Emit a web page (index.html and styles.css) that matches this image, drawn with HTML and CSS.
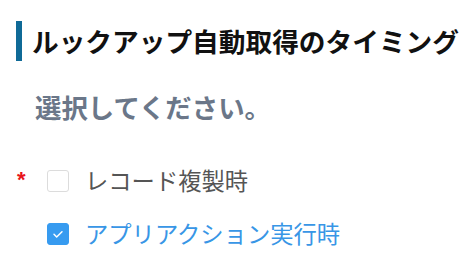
FILE: index.html
```html
<!DOCTYPE html>
<html lang="ja">
<head>
<meta charset="utf-8">
<link rel="stylesheet" href="styles.css">
</head>
<body>
<div class="panel">
  <h2 class="title">ルックアップ自動取得のタイミング</h2>
  <p class="subtitle">選択してください。</p>
  <div class="field">
    <span class="required">*</span>
    <div class="options">
      <label class="option">
        <span class="box"></span>
        <span class="label">レコード複製時</span>
      </label>
      <label class="option checked">
        <span class="box">
          <svg viewBox="0 0 24 24" width="16" height="16"><path d="M6 12.5l4 4L18 8.5" fill="none" stroke="#fff" stroke-width="2.2" stroke-linecap="round" stroke-linejoin="round"/></svg>
        </span>
        <span class="label">アプリアクション実行時</span>
      </label>
    </div>
  </div>
</div>
</body>
</html>
```
FILE: styles.css
```css
html, body {
  margin: 0;
  padding: 0;
  background: #fff;
}
body {
  font-family: "Noto Sans CJK JP", "Noto Sans", sans-serif;
}
.panel {
  width: 474px;
  height: 268px;
  padding-top: 21px;
  box-sizing: border-box;
}
.title {
  margin: 0 0 0 16px;
  height: 40px;
  display: flex;
  align-items: center;
  border-left: 6px solid #0f6a97;
  padding-left: 10px;
  font-size: 26.7px;
  font-weight: 700;
  color: #111;
  line-height: 1;
}
.subtitle {
  margin: 31px 0 0 35px;
  font-size: 26.4px;
  line-height: 30px;
  font-weight: 700;
  color: #6b7789;
}
.field {
  display: flex;
  margin-top: 47px;
}
.required {
  width: 47px;
  padding-left: 17px;
  box-sizing: border-box;
  color: #e8141b;
  font-size: 22px;
  font-weight: 700;
  line-height: 22px;
  height: 22px;
  font-family: "Liberation Sans", sans-serif;
}
.options {
  display: flex;
  flex-direction: column;
  gap: 30px;
}
.option {
  display: flex;
  align-items: center;
  gap: 16px;
  height: 23px;
}
.box {
  width: 22px;
  height: 22px;
  box-sizing: border-box;
  border: 1.5px solid #dcdcdc;
  border-radius: 3px;
  background: #fff;
  display: flex;
  align-items: center;
  justify-content: center;
}
.checked .box {
  border-color: #379bf0;
  background: #379bf0;
}
.label {
  font-size: 23.3px;
  line-height: 23px;
  color: #555;
}
.checked .label {
  color: #3896e6;
}
```
